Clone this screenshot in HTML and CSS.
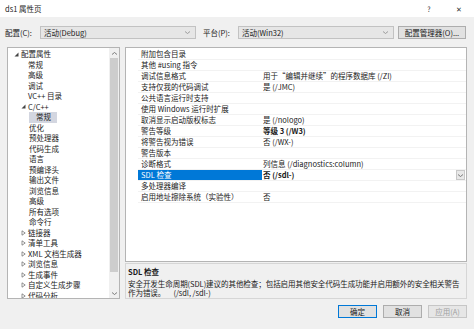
FILE: index.html
```html
<!DOCTYPE html>
<html>
<head>
    <title>ds1 属性页</title>
    <link rel="stylesheet" href="styles.css">
</head>
<body>
    <div class="titlebar">
        <span class="title">ds1 属性页</span>
        <span class="tb-btn">?</span>
        <span class="tb-btn">✕</span>
    </div>

    <div class="config-row">
        <span class="label">配置(C):</span>
        <div class="combo">
            <span>活动(Debug)</span>
            <svg width="7" height="5" viewBox="0 0 7 5"><path d="M1 1.5 L3.5 3.5 L6 1.5" fill="none" stroke="#8a8a8a" stroke-width="0.8"/></svg>
        </div>
        <span class="label label-gap">平台(P):</span>
        <div class="combo">
            <span>活动(Win32)</span>
            <svg width="7" height="5" viewBox="0 0 7 5"><path d="M1 1.5 L3.5 3.5 L6 1.5" fill="none" stroke="#8a8a8a" stroke-width="0.8"/></svg>
        </div>
        <button class="btn btn-manager">配置管理器(O)...</button>
    </div>

    <div class="main">
        <div class="tree">
            <div class="tree-list">
                <div class="ti lv0"><svg class="glyph" width="5" height="5" viewBox="0 0 5 5"><path d="M4.5 0.5 L4.5 4.5 L0.5 4.5 Z" fill="#444"/></svg>配置属性</div>
                <div class="ti lv1">常规</div>
                <div class="ti lv1">高级</div>
                <div class="ti lv1">调试</div>
                <div class="ti lv1">VC++ 目录</div>
                <div class="ti lv1x"><svg class="glyph" width="5" height="5" viewBox="0 0 5 5"><path d="M4.5 0.5 L4.5 4.5 L0.5 4.5 Z" fill="#444"/></svg>C/C++</div>
                <div class="ti lv2 selected"><span>常规</span></div>
                <div class="ti lv2">优化</div>
                <div class="ti lv2">预处理器</div>
                <div class="ti lv2">代码生成</div>
                <div class="ti lv2">语言</div>
                <div class="ti lv2">预编译头</div>
                <div class="ti lv2">输出文件</div>
                <div class="ti lv2">浏览信息</div>
                <div class="ti lv2">高级</div>
                <div class="ti lv2">所有选项</div>
                <div class="ti lv2">命令行</div>
                <div class="ti lv1x"><svg class="glyph" width="5" height="6" viewBox="0 0 5 6"><path d="M1 0.8 L4.2 3 L1 5.2 Z" fill="none" stroke="#666" stroke-width="0.7"/></svg>链接器</div>
                <div class="ti lv1x"><svg class="glyph" width="5" height="6" viewBox="0 0 5 6"><path d="M1 0.8 L4.2 3 L1 5.2 Z" fill="none" stroke="#666" stroke-width="0.7"/></svg>清单工具</div>
                <div class="ti lv1x"><svg class="glyph" width="5" height="6" viewBox="0 0 5 6"><path d="M1 0.8 L4.2 3 L1 5.2 Z" fill="none" stroke="#666" stroke-width="0.7"/></svg>XML 文档生成器</div>
                <div class="ti lv1x"><svg class="glyph" width="5" height="6" viewBox="0 0 5 6"><path d="M1 0.8 L4.2 3 L1 5.2 Z" fill="none" stroke="#666" stroke-width="0.7"/></svg>浏览信息</div>
                <div class="ti lv1x"><svg class="glyph" width="5" height="6" viewBox="0 0 5 6"><path d="M1 0.8 L4.2 3 L1 5.2 Z" fill="none" stroke="#666" stroke-width="0.7"/></svg>生成事件</div>
                <div class="ti lv1x"><svg class="glyph" width="5" height="6" viewBox="0 0 5 6"><path d="M1 0.8 L4.2 3 L1 5.2 Z" fill="none" stroke="#666" stroke-width="0.7"/></svg>自定义生成步骤</div>
                <div class="ti lv1x"><svg class="glyph" width="5" height="6" viewBox="0 0 5 6"><path d="M1 0.8 L4.2 3 L1 5.2 Z" fill="none" stroke="#666" stroke-width="0.7"/></svg>代码分析</div>
            </div>
            <div class="vscroll">
                <div class="arrow">
                    <svg width="7" height="5" viewBox="0 0 7 5"><path d="M1 3.5 L3.5 1.5 L6 3.5" fill="none" stroke="#606060" stroke-width="0.8"/></svg>
                </div>
                <div class="track">
                    <div class="thumb"></div>
                </div>
                <div class="arrow">
                    <svg width="7" height="5" viewBox="0 0 7 5"><path d="M1 1.5 L3.5 3.5 L6 1.5" fill="none" stroke="#606060" stroke-width="0.8"/></svg>
                </div>
            </div>
        </div>

        <div class="right-col">
            <div class="grid">
                <div class="row"><span class="gutter"></span><span class="name">附加包含目录</span><span class="value"></span></div>
                <div class="row"><span class="gutter"></span><span class="name">其他 #using 指令</span><span class="value"></span></div>
                <div class="row"><span class="gutter"></span><span class="name">调试信息格式</span><span class="value">用于“编辑并继续”的程序数据库 (/ZI)</span></div>
                <div class="row"><span class="gutter"></span><span class="name">支持仅我的代码调试</span><span class="value">是 (/JMC)</span></div>
                <div class="row"><span class="gutter"></span><span class="name">公共语言运行时支持</span><span class="value"></span></div>
                <div class="row"><span class="gutter"></span><span class="name">使用 Windows 运行时扩展</span><span class="value"></span></div>
                <div class="row"><span class="gutter"></span><span class="name">取消显示启动版权标志</span><span class="value">是 (/nologo)</span></div>
                <div class="row"><span class="gutter"></span><span class="name">警告等级</span><span class="value bold">等级 3 (/W3)</span></div>
                <div class="row"><span class="gutter"></span><span class="name">将警告视为错误</span><span class="value">否 (/WX-)</span></div>
                <div class="row"><span class="gutter"></span><span class="name">警告版本</span><span class="value"></span></div>
                <div class="row"><span class="gutter"></span><span class="name">诊断格式</span><span class="value">列信息 (/diagnostics:column)</span></div>
                <div class="row active"><span class="gutter"></span><span class="name">SDL 检查</span><span class="value bold">否 (/sdl-)<span class="drop"><svg width="7" height="5" viewBox="0 0 7 5"><path d="M1 1.5 L3.5 3.5 L6 1.5" fill="none" stroke="#606060" stroke-width="0.8"/></svg></span></span></div>
                <div class="row"><span class="gutter"></span><span class="name">多处理器编译</span><span class="value"></span></div>
                <div class="row"><span class="gutter"></span><span class="name">启用地址擦除系统（实验性）</span><span class="value">否</span></div>
            </div>
            <div class="desc">
                <div class="desc-title">SDL 检查</div>
                <div class="desc-text">安全开发生命周期(SDL)建议的其他检查；包括启用其他安全代码生成功能并启用额外的安全相关警告作为错误。&nbsp;&nbsp;&nbsp;&nbsp;&nbsp;(/sdl, /sdl-)</div>
            </div>
        </div>
    </div>

    <div class="buttons">
        <button class="btn btn-default">确定</button>
        <button class="btn">取消</button>
        <button class="btn btn-disabled">应用(A)</button>
    </div>
</body>
</html>
```

FILE: styles.css
```css
body {
    margin: 0;
    width: 474px;
    height: 329px;
    overflow: hidden;
    background-color: #f0f0f0;
    font-family: "Noto Sans CJK SC", sans-serif;
    font-size: 7.5px;
    color: #1a1a1a;
}
.titlebar {
    height: 17px;
    background-color: #fff;
    display: flex;
    align-items: center;
    padding-left: 5px;
}
.title {
    flex: 1;
}
.tb-btn {
    width: 30px;
    text-align: center;
    font-size: 7px;
    color: #333;
}
.config-row {
    display: flex;
    align-items: center;
    height: 13px;
    margin-top: 9px;
    padding-left: 5px;
}
.label {
    width: 35px;
}
.label-gap {
    margin-left: 7px;
}
.combo {
    width: 156px;
    height: 13px;
    box-sizing: border-box;
    border: 1px solid #c2c2c2;
    background-color: #e6e6e6;
    display: flex;
    align-items: center;
    justify-content: space-between;
    padding: 0 4px 0 3px;
}
.btn {
    font-family: "Noto Sans CJK SC", sans-serif;
    font-size: 7.5px;
    height: 13px;
    width: 39px;
    padding: 0;
    line-height: 11px;
    box-sizing: border-box;
    border: 1px solid #adadad;
    background-color: #e1e1e1;
    color: #1a1a1a;
}
.btn-manager {
    width: 68px;
    margin-left: 4px;
}
.btn-default {
    border-color: #0078d7;
}
.btn-disabled {
    color: #a0a0a0;
    border-color: #c6c6c6;
    background-color: #e6e6e6;
}
.main {
    display: flex;
    gap: 5px;
    height: 252px;
    margin-top: 8px;
    padding-left: 7px;
}
.tree {
    width: 113px;
    box-sizing: border-box;
    border: 1px solid #b4b4b4;
    background-color: #fff;
    display: flex;
    overflow: hidden;
}
.tree-list {
    flex: 1;
    padding-top: 1px;
    overflow: hidden;
}
.ti {
    height: 10.5px;
    line-height: 10.5px;
    white-space: nowrap;
    display: flex;
    align-items: center;
}
.glyph {
    margin-right: 2px;
    flex-shrink: 0;
}
.lv0 { padding-left: 6px; }
.lv1 { padding-left: 20px; }
.lv1x { padding-left: 13px; }
.lv2 { padding-left: 21px; }
.selected span {
    background-color: #d3d6e0;
    padding: 0 6px 0 7px;
}
.vscroll {
    width: 10px;
    background-color: #f0f0f0;
    display: flex;
    flex-direction: column;
}
.arrow {
    height: 10px;
    display: flex;
    align-items: center;
    justify-content: center;
}
.track {
    flex: 1;
    padding: 0 1px;
}
.thumb {
    height: 214px;
    background-color: #cdcdcd;
}
.right-col {
    width: 342px;
    display: flex;
    flex-direction: column;
    gap: 1px;
}
.grid {
    height: 215px;
    box-sizing: border-box;
    border: 1px solid #b4b4b4;
    background-color: #fff;
    padding-top: 1px;
}
.row {
    display: grid;
    grid-template-columns: 12px 124px 1fr;
    height: 11px;
}
.name, .value {
    box-sizing: border-box;
    border-bottom: 1px solid #f2f2f2;
    line-height: 10px;
    white-space: nowrap;
    overflow: hidden;
}
.name {
    padding-left: 3px;
}
.value {
    padding-left: 1px;
    display: flex;
    align-items: center;
    justify-content: space-between;
}
.bold {
    font-weight: bold;
}
.active .name {
    background-color: #0078d7;
    color: #fff;
}
.drop {
    width: 9px;
    height: 10px;
    box-sizing: border-box;
    border: 1px solid #c8c8c8;
    background-color: #e8e8e8;
    margin-right: 1px;
    display: flex;
    align-items: center;
    justify-content: center;
}
.desc {
    height: 36px;
    box-sizing: border-box;
    border: 1px solid #d6d6d6;
    padding: 3px 0 0 2px;
}
.desc-title {
    font-weight: bold;
    line-height: 9px;
    margin-bottom: 3px;
}
.desc-text {
    line-height: 9px;
    letter-spacing: -0.05px;
}
.buttons {
    display: flex;
    justify-content: flex-end;
    gap: 6px;
    margin-top: 6px;
    padding-right: 7px;
}
```
